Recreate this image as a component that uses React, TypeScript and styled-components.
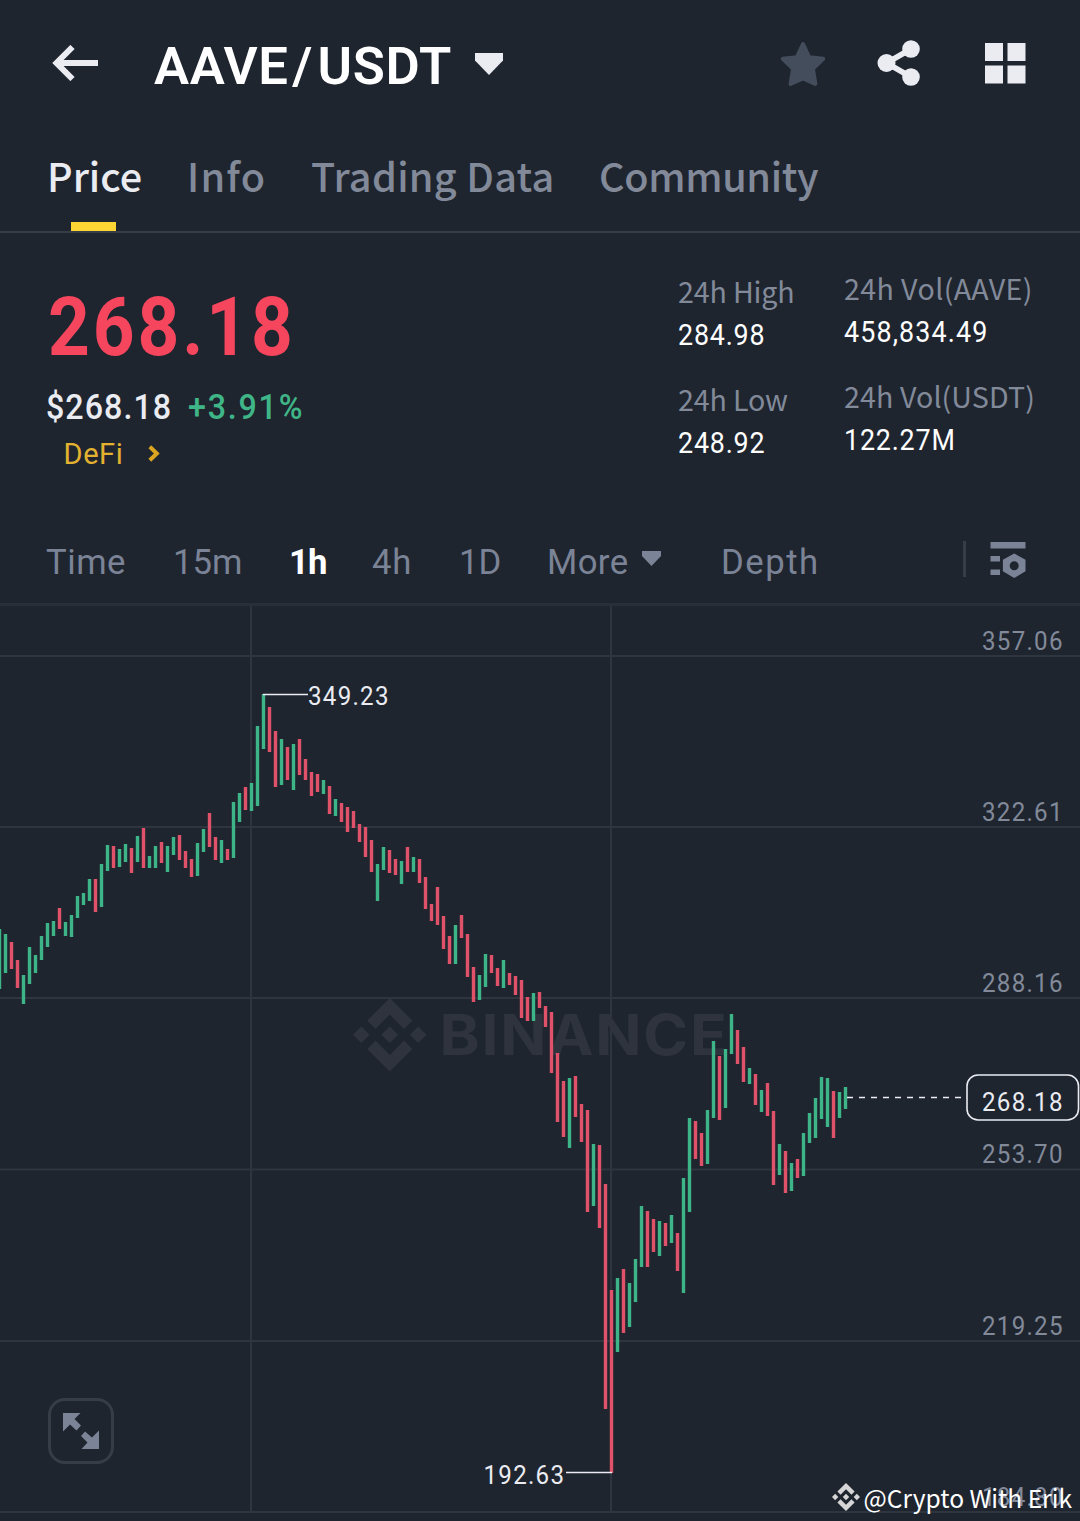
import React from "react";
import styled, { createGlobalStyle } from "styled-components";

const color = {
  bg: "#1f252f",
  text: "#eaecf2",
  white: "#ffffff",
  muted: "#828a9a",
  dim: "#7b8396",
  line: "#363d47",
  grid: "#2e353f",
  up: "#3eb489",
  down: "#e0526a",
  red: "#f6465d",
  green: "#3fb687",
  yellow: "#fcd535",
  gold: "#e3b230",
};

const sans = `Roboto, "Liberation Sans", sans-serif`;
const humanist = `"Noto Sans CJK SC", "Noto Sans", sans-serif`;

const GlobalStyle = createGlobalStyle`
  * { box-sizing: border-box; }
  body { margin: 0; background: ${color.bg}; }
`;

const Page = styled.main`
  width: 1080px;
  height: 1521px;
  overflow: hidden;
  display: flex;
  flex-direction: column;
  background: ${color.bg};
  color: ${color.text};
  font-family: ${sans};
  white-space: nowrap;
`;

const Header = styled.header`
  height: 126px;
  display: flex;
  align-items: center;
  padding: 0 54px 0 52px;
`;

const Title = styled.h1`
  margin: 5px 0 0 56px;
  width: 301px;
  font-size: 52.6px;
  line-height: 64px;
  font-weight: 600;
  letter-spacing: 0.7px;
  color: ${color.white};
`;

const Slash = styled.span`
  margin: 0 4.5px 0 3.5px;
`;

const HeaderActions = styled.div`
  margin-left: auto;
  display: flex;
  align-items: center;
`;

const Icon = styled.svg<{ $ml?: number; $mt?: number }>`
  display: block;
  flex: none;
  margin-left: ${(p) => p.$ml ?? 0}px;
  margin-top: ${(p) => p.$mt ?? 0}px;
`;

const Tabs = styled.nav`
  height: 107px;
  display: flex;
  gap: 47px;
  padding: 19px 47px 0;
  border-bottom: 2px solid ${color.line};
`;

const Tab = styled.div<{ $width: number; $active?: boolean; $spacing: number }>`
  width: ${(p) => p.$width}px;
  display: flex;
  flex-direction: column;
  font-family: ${humanist};
  font-size: 39.6px;
  line-height: 60px;
  font-weight: 500;
  letter-spacing: ${(p) => p.$spacing}px;
  color: ${(p) => (p.$active ? color.text : color.muted)};
`;

const TabMarker = styled.span`
  align-self: center;
  width: 45px;
  height: 9px;
  margin-top: 17px;
  background: ${color.yellow};
`;

const Summary = styled.section`
  height: 287px;
  display: flex;
  justify-content: space-between;
`;

const PriceColumn = styled.div`
  padding: 46px 0 0 46px;
`;

/* Digits are condensed horizontally and tracked out, like DIN figures. */
const Condensed = styled.div<{ $scale: number; $spacing: number }>`
  width: max-content;
  transform: scaleX(${(p) => p.$scale});
  transform-origin: left center;
  letter-spacing: ${(p) => p.$spacing}px;
`;

const BigPrice = styled(Condensed)`
  margin-left: 2px;
  font-size: 82px;
  line-height: 96px;
  font-weight: 700;
  color: ${color.red};
`;

const SubRow = styled.div`
  display: grid;
  grid-template-columns: 142px max-content;
  margin-top: 9px;
  font-size: 34.7px;
  line-height: 46px;
  font-weight: 500;
`;

const Change = styled(Condensed)`
  color: ${color.green};
`;

const Sector = styled.div`
  display: flex;
  align-items: center;
  margin-top: 4px;
  padding-left: 17.5px;
  font-size: 29px;
  line-height: 40px;
  letter-spacing: 0.6px;
  color: ${color.gold};
`;

const Stats = styled.div`
  display: flex;
  width: 402px;
`;

const StatColumn = styled.div<{ $top: number; $width: number }>`
  width: ${(p) => p.$width}px;
  padding-top: ${(p) => p.$top}px;
  display: flex;
  flex-direction: column;
  gap: 18px;
`;

const StatLabel = styled.div<{ $spacing: number }>`
  font-family: ${humanist};
  font-size: 28.6px;
  line-height: 45px;
  letter-spacing: ${(p) => p.$spacing}px;
  color: ${color.muted};
`;

const StatValue = styled(Condensed)`
  font-size: 29.5px;
  line-height: 45px;
  color: ${color.white};
`;

const Intervals = styled.nav`
  height: 83px;
  display: flex;
  align-items: center;
  padding: 0 54px 0 46px;
`;

const Interval = styled.div<{ $width: number; $spacing?: number; $ml?: number; $active?: boolean }>`
  width: ${(p) => p.$width}px;
  margin-left: ${(p) => p.$ml ?? 0}px;
  font-size: 34.7px;
  line-height: 46px;
  letter-spacing: ${(p) => p.$spacing ?? 0}px;
  font-weight: ${(p) => (p.$active ? 700 : 400)};
  color: ${(p) => (p.$active ? color.white : color.dim)};
`;

const Divider = styled.span`
  width: 3px;
  height: 36px;
  margin-left: auto;
  margin-top: -6px;
  background: ${color.line};
`;

const Chart = styled.section`
  position: relative;
  height: 918px;
`;

const Plot = styled.svg`
  display: block;
  font-family: ${sans};
  font-size: 26.5px;
`;

const ExpandButton = styled.button`
  position: absolute;
  left: 48px;
  top: 795px;
  width: 66px;
  height: 66px;
  padding: 0;
  display: flex;
  align-items: center;
  justify-content: center;
  border: 3px solid ${color.line};
  border-radius: 17px;
  background: transparent;
`;

const Credit = styled.div`
  position: absolute;
  right: 8px;
  bottom: 6.5px;
  display: flex;
  align-items: center;
  gap: 3px;
  font-family: ${humanist};
  font-size: 24.6px;
  line-height: 36px;
  font-weight: 400;
  color: ${color.white};
`;

const Logo = () => (
  <path d="M38.73 53.2l24.59-24.58 24.6 24.6 14.3-14.31L63.32 0l-38.9 38.9zM0 63.31l14.3-14.31 14.31 14.31-14.31 14.3zM38.73 73.41l24.59 24.59 24.6-24.6 14.31 14.29-38.91 38.91-38.91-38.88zM98 63.31l14.3-14.31 14.31 14.3-14.31 14.32zM77.83 63.3L63.32 48.78 48.81 63.28l14.51 14.5z" />
);

const Figure = ({ x, y, children }: { x: number; y: number; children: string }) => (
  <text transform={`translate(${x} ${y}) scale(0.91 1)`} letterSpacing="1.4">
    {children}
  </text>
);

/* Bars are six pixels apart; extents are thirds of a pixel below the run's base. */
type Run = { start: number; base: number; bars: string };

const runs: Run[] = [
  {
    start: -1,
    base: 780,
    bars: `g448-627 g462-580 r487-568 r541-624 g586-673 g502-611 g526-580 g469-540 g428-501 g424-467
    r384-446 g427-468 g405-471 g348-413 g340-374 g298-364 r298-395 g252-380 g195-274 r198-263
    g208-260 g193-247 r205-280 g168-247 r143-264 g227-265 g199-265 r185-248 g197-275 g171-224
    r166-241 r213-265 r238-290 g190-287 g148-215 r99-202 r171-239 g181-248 r207-240`,
  },
  {
    start: 233,
    base: 670,
    bars: `g396-563 g370-456 r351-419 g340-422 g167-408 g72-236 r111-245 r182-350 g208-345 r230-330
    g223-361 r207-314 r268-331 r307-377 r313-366 g331-371 r348-431 g386-437 r398-455 r411-485
    r422-474 r463-515 r472-560 r510-605 g583-692 g531-601 r540-609 r567-616 g572-642 r530-606
    g562-606 r568-638`,
  },
  {
    start: 425,
    base: 860,
    bars: `r52-146 r132-182 r82-194 r167-266 r228-312 g196-311 r166-234 r221-352 r321-426 g344-419
    g281-380 r285-340 r325-378 g301-384 r339-374 r347-406 r361-473 r411-484 g398-482 r396-445
    r438-502 r456-640 r578-786 r663-830 g655-863 r647-772 r731-846 r751-1055 g851-1038 r856-1104
    r972-1646 r1290-1840`,
  },
  {
    start: 617,
    base: 1000,
    bars: `g834-1055 r806-999 g849-981 g776-906 g619-800 r634-800 r657-755 g663-767 r669-738 g645-729
    r699-813 g534-879 g355-635 r362-476 r399-498 g331-491 g123-355 r169-359 g147-325 g42-161
    r91-192 r141-247 g203-253 r221-314 g271-336 r248-347 r333-555 g433-524 r453-578 g490-573
    r476-535 g400-528 g340-429 g294-413 g232-356 g234-380 r272-413 g276-355 g262-328`,
  },
];

const candles = runs.flatMap((run) =>
  run.bars.split(/\s+/).map((bar, i) => {
    const [top, bottom] = bar.slice(1).split("-").map(Number);
    const y = Math.round(run.base + top / 3);
    return {
      x: run.start + i * 6 - 1.2,
      y,
      height: Math.round(run.base + bottom / 3) - y,
      fill: bar[0] === "g" ? color.up : color.down,
    };
  })
);

const gridRows = [655, 826, 997, 1168.5, 1340, 1511];
const axis: [string, number][] = [
  ["357.06", 650],
  ["322.61", 821],
  ["288.16", 992],
  ["253.70", 1163],
  ["219.25", 1335],
  ["184.80", 1506],
];

export default function App() {
  return (
    <>
      <GlobalStyle />
      <Page>
        <Header>
          <Icon width="46" height="36" viewBox="0 0 46 36">
            <path d="M46 18H5M20.5 2L4.5 18l16 16" fill="none" stroke={color.text} strokeWidth="6" />
          </Icon>
          <Title>
            AAVE<Slash>/</Slash>USDT
          </Title>
          <Icon width="28" height="22" viewBox="0 0 28 22" $ml={20} $mt={2}>
            <path d="M0 0h28v7.5L14 22 0 7.5z" fill={color.text} />
          </Icon>
          <HeaderActions>
            <Icon width="46" height="46" viewBox="0 0 46 46" $mt={2}>
              <path
                d="M23 3l6.1 13.2 14.1 1.6-10.3 10.1 2.5 15L23 37.5 10.6 42.9l2.5-15L2.8 17.8l14.1-1.6z"
                fill="#444d5b"
                stroke="#444d5b"
                strokeWidth="4"
                strokeLinejoin="round"
              />
            </Icon>
            <Icon width="44" height="46" viewBox="0 0 44 46" $ml={51}>
              <path d="M34 9L9.5 23L34 37" fill="none" stroke={color.text} strokeWidth="5.5" />
              <circle cx="34" cy="9" r="8.8" fill={color.text} />
              <circle cx="9.5" cy="23" r="9" fill={color.text} />
              <circle cx="34" cy="37" r="8.8" fill={color.text} />
            </Icon>
            <Icon width="41" height="41" viewBox="0 0 41 41" $ml={64}>
              <path d="M0 0h18v18H0zM22.5 0h18v18h-18zM0 22.5h18v18H0zM22.5 22.5h18v18h-18z" fill={color.text} />
            </Icon>
          </HeaderActions>
        </Header>

        <Tabs>
          <Tab $width={93} $active $spacing={0}>
            Price
            <TabMarker />
          </Tab>
          <Tab $width={77} $spacing={1.2}>Info</Tab>
          <Tab $width={241} $spacing={0.3}>Trading Data</Tab>
          <Tab $width={220} $spacing={-0.35}>Community</Tab>
        </Tabs>

        <Summary>
          <PriceColumn>
            <BigPrice $scale={0.89} $spacing={3.2}>268.18</BigPrice>
            <SubRow>
              <Condensed $scale={0.93} $spacing={1.1}>$268.18</Condensed>
              <Change $scale={0.93} $spacing={1.9}>+3.91%</Change>
            </SubRow>
            <Sector>
              DeFi
              <Icon width="12" height="17" viewBox="0 0 12 17" $ml={25} $mt={-1}>
                <path d="M1.8 1.8l7 6.7-7 6.7" fill="none" stroke="#dba520" strokeWidth="4" />
              </Icon>
            </Sector>
          </PriceColumn>
          <Stats>
            <StatColumn $top={35} $width={166}>
              <div>
                <StatLabel $spacing={-0.15}>24h High</StatLabel>
                <StatValue $scale={0.91} $spacing={0.9}>284.98</StatValue>
              </div>
              <div>
                <StatLabel $spacing={-0.15}>24h Low</StatLabel>
                <StatValue $scale={0.91} $spacing={0.9}>248.92</StatValue>
              </div>
            </StatColumn>
            <StatColumn $top={32} $width={236}>
              <div>
                <StatLabel $spacing={0.4}>24h Vol(AAVE)</StatLabel>
                <StatValue $scale={0.91} $spacing={1.25}>458,834.49</StatValue>
              </div>
              <div>
                <StatLabel $spacing={0.1}>24h Vol(USDT)</StatLabel>
                <StatValue $scale={0.91} $spacing={0.9}>122.27M</StatValue>
              </div>
            </StatColumn>
          </Stats>
        </Summary>

        <Intervals>
          <Interval $width={127} $spacing={0.5}>Time</Interval>
          <Interval $width={116}>15m</Interval>
          <Interval $width={83} $spacing={-0.8} $active>1h</Interval>
          <Interval $width={87} $spacing={0.8}>4h</Interval>
          <Interval $width={88}>1D</Interval>
          <Interval $width={95} $spacing={0.4}>More</Interval>
          <Icon width="19" height="15" viewBox="0 0 19 15" $mt={-7}>
            <path d="M0 0h19v5L9.5 15 0 5z" fill={color.dim} />
          </Icon>
          <Interval $width={98} $ml={60} $spacing={1.5}>Depth</Interval>
          <Divider />
          <Icon width="36" height="37" viewBox="0 0 36 37" $ml={24} $mt={-4}>
            <path d="M0.5 1h35v6.5h-35zM0.5 15h9.5v5.5h-9.5zM0.5 28.5h9.5V34h-9.5z" fill={color.dim} />
            <path
              d="M24.2 12.5l11.3 6.2v11.6L24.2 37l-11.3-6.7V18.7zM24.2 20.3a4.5 4.5 0 100 9 4.5 4.5 0 000-9z"
              fill={color.dim}
              fillRule="evenodd"
            />
          </Icon>
        </Intervals>

        <Chart>
          <Plot width="1080" height="918" viewBox="0 603 1080 918">
            <rect x="0" y="603" width="1080" height="3" fill="#292f3a" />
            {gridRows.map((y) => (
              <rect key={y} x="0" y={y} width="1080" height="2" fill={color.grid} />
            ))}
            <rect x="250" y="606" width="2" height="906" fill={color.grid} />
            <rect x="610" y="606" width="2" height="906" fill={color.grid} />
            <g fill="#2e333d">
              <svg x="353" y="998" width="73.5" height="73.5" viewBox="0 0 126.61 126.61">
                <Logo />
              </svg>
              <text
                transform="translate(439.5 1054.5) scale(1.09 1)"
                fontFamily="Inter, sans-serif"
                fontWeight="700"
                fontSize="55.7"
                letterSpacing="1.6"
              >
                BINANCE
              </text>
            </g>
            {candles.map((c) => (
              <rect key={c.x} x={c.x} y={c.y} width="3.4" height={c.height} fill={c.fill} />
            ))}
            <path d="M263 694.5H308M566 1472.5H612" stroke={color.text} strokeWidth="1.6" />
            <g fill={color.text}>
              <Figure x={308} y={704.5}>349.23</Figure>
              <Figure x={483.5} y={1483.5}>192.63</Figure>
            </g>
            <g fill={color.muted}>
              {axis.map(([label, y]) => (
                <Figure key={label} x={982} y={y}>{label}</Figure>
              ))}
            </g>
            <path d="M847 1097.5H962" stroke={color.text} strokeWidth="1.6" strokeDasharray="6 6" />
            <rect x="967" y="1075" width="111.5" height="45" rx="11" fill={color.bg} stroke={color.text} strokeWidth="1.6" />
            <g fill={color.text}>
              <Figure x={982} y={1111}>268.18</Figure>
            </g>
          </Plot>
          <ExpandButton aria-label="Expand chart">
            <svg width="36" height="36" viewBox="0 0 36 36" fill={color.dim}>
              <path d="M0 0h17.5l-6 6 6.5 6.5-4.5 5L7 11.5l-7 7z" />
              <path d="M36 36H18.5l6-6.500-6.500-6.500L22 18.500l7 6 7-7z" />
            </svg>
          </ExpandButton>
          <Credit>
            <svg width="28" height="28" viewBox="0 0 126.61 126.61" fill="#d6d6d6">
              <Logo />
            </svg>
            @Crypto With Erik
          </Credit>
        </Chart>
      </Page>
    </>
  );
}
